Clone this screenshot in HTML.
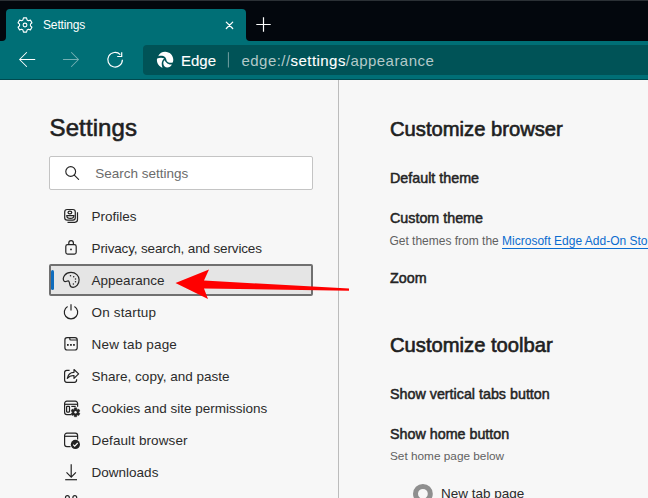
<!DOCTYPE html>
<html><head><meta charset="utf-8">
<style>
*{margin:0;padding:0;box-sizing:border-box}
html,body{width:648px;height:498px;overflow:hidden;background:#f7f7f7;font-family:"Liberation Sans",sans-serif;color:#242424}
.abs{position:absolute}
.t{position:absolute;white-space:nowrap;line-height:1}
#strip{left:0;top:0;width:648px;height:41px;background:#03070d}
#topline{left:0;top:0;width:648px;height:1px;background:#2b3035}
#tab{left:6px;top:9px;width:240px;height:33px;background:#006f76;border-radius:4px 4px 0 0}
#toolbar{left:0;top:41px;width:648px;height:38px;background:#006f76}
#tbline{left:0;top:79px;width:648px;height:1px;background:#004a4f}
#addr{left:143px;top:45px;width:520px;height:30px;background:#005357;border-radius:4px}
#divider{left:338px;top:80px;width:1px;height:418px;background:#bcbcbc}
#search{left:49px;top:156px;width:264px;height:34px;background:#fff;border:1px solid #c4c4c4;border-radius:2px}
#sel{left:49px;top:264px;width:264px;height:32px;background:#e5e5e5;border:2px solid #707070;border-radius:2px}
#bluebar{left:51px;top:270px;width:3px;height:20px;background:#0f6cbd;border-radius:2px}
.item{font-size:13.5px;color:#2b2b2b}
.sub{font-size:14.3px;color:#242424;-webkit-text-stroke:0.5px #242424}
.hd{font-size:20.2px;color:#1f1f1f;-webkit-text-stroke:0.65px #1f1f1f}
.small{font-size:12px;color:#616161}
</style></head><body>
<div id="strip" class="abs"></div>
<div id="topline" class="abs"></div>
<div id="tab" class="abs"></div>
<div id="toolbar" class="abs"></div>
<div id="tbline" class="abs"></div>
<div id="addr" class="abs"></div>

<!-- tab contents -->
<div class="t" style="left:43px;top:18.8px;font-size:12px;letter-spacing:-0.15px;color:#fff">Settings</div>

<div class="t" style="left:181px;top:53.3px;font-size:15px;color:#fff;-webkit-text-stroke:0.12px #fff">Edge</div>
<div class="t" style="left:241.5px;top:53px;font-size:15px;letter-spacing:0.45px;color:#b3c9c9">edge://<span style="color:#fff;-webkit-text-stroke:0.12px #fff">settings</span>/appearance</div>
<!-- page -->
<div id="divider" class="abs"></div>
<div class="t" style="left:49.5px;top:116px;font-size:24px;letter-spacing:0.12px;color:#1f1f1f;-webkit-text-stroke:0.6px #1f1f1f">Settings</div>
<div id="search" class="abs"></div>
<div class="t" style="left:95.3px;top:166.6px;font-size:13.5px;color:#6b6b6b">Search settings</div>
<div id="sel" class="abs"></div>
<div id="bluebar" class="abs"></div>

<div class="t item" style="left:91.6px;top:209.6px">Profiles</div>
<div class="t item" style="left:91.6px;top:241.6px;letter-spacing:-0.15px">Privacy, search, and services</div>
<div class="t item" style="left:91.6px;top:273.6px">Appearance</div>
<div class="t item" style="left:91.6px;top:305.6px;letter-spacing:0.15px">On startup</div>
<div class="t item" style="left:91.6px;top:337.6px;letter-spacing:0.18px">New tab page</div>
<div class="t item" style="left:91.6px;top:369.6px">Share, copy, and paste</div>
<div class="t item" style="left:91.6px;top:401.6px">Cookies and site permissions</div>
<div class="t item" style="left:91.6px;top:433.6px;letter-spacing:0.1px">Default browser</div>
<div class="t item" style="left:91.6px;top:465.6px">Downloads</div>

<div class="t hd" style="left:390px;top:119px">Customize browser</div>
<div class="t sub" style="left:390px;top:171.3px">Default theme</div>
<div class="t sub" style="left:390px;top:211.3px">Custom theme</div>
<div class="t small" style="left:389.4px;top:234.8px">Get themes from the <span style="color:#0b6ccf;border-bottom:1px solid #0b6ccf">Microsoft Edge Add-On Store</span></div>
<div class="t sub" style="left:390px;top:271.3px">Zoom</div>
<div class="t hd" style="left:390px;top:335px">Customize toolbar</div>
<div class="t sub" style="left:390px;top:387.3px">Show vertical tabs button</div>
<div class="t sub" style="left:390px;top:427.3px">Show home button</div>
<div class="t small" style="left:390px;top:451px;font-size:11.8px">Set home page below</div>
<div class="t item" style="left:441px;top:487px">New tab page</div>

<svg class="abs" style="left:0;top:0" width="648" height="498" viewBox="0 0 648 498">
<!-- tab inverse corners -->
<path d="M2,41 A4,4 0 0 0 6,37 L6,41 Z" fill="#006f76"/>
<path d="M246,37 A4,4 0 0 0 250,41 L246,41 Z" fill="#006f76"/>
<!-- gear -->
<path d="M27.06,19.90 L26.52,17.86 L23.48,17.86 L22.94,19.90 L21.61,20.67 L19.58,20.12 L18.06,22.74 L19.55,24.23 L19.55,25.77 L18.06,27.26 L19.58,29.88 L21.61,29.33 L22.94,30.10 L23.48,32.14 L26.52,32.14 L27.06,30.10 L28.39,29.33 L30.42,29.88 L31.94,27.26 L30.45,25.77 L30.45,24.23 L31.94,22.74 L30.42,20.12 L28.39,20.67 Z" fill="none" stroke="#fff" stroke-width="1.1" stroke-linejoin="round"/>
<circle cx="25" cy="25" r="1.9" fill="none" stroke="#fff" stroke-width="1.1"/>
<!-- close x -->
<path d="M226.3,22.1 L232.7,28.5 M232.7,22.1 L226.3,28.5" stroke="#fff" stroke-width="1.25" stroke-linecap="round"/>
<!-- plus -->
<path d="M256.3,24.5 H270.7 M263.5,17.3 V31.7" stroke="#fff" stroke-width="1.2"/>
<!-- back -->
<path d="M34.8,59.5 H19.6 M26.6,52.5 L19.6,59.5 L26.6,66.5" fill="none" stroke="#fff" stroke-width="1.05" stroke-linejoin="round" stroke-linecap="round"/>
<!-- forward -->
<path d="M63.4,59.5 H78.5 M71.5,52.5 L78.5,59.5 L71.5,66.5" fill="none" stroke="#fff" stroke-opacity="0.45" stroke-width="1.05" stroke-linejoin="round" stroke-linecap="round"/>
<!-- refresh -->
<path d="M122.4,59.7 A7.3,7.3 0 1 1 120.3,54.6" fill="none" stroke="#fff" stroke-width="1.2"/>
<path d="M117.2,56.5 H121.7 V52.2" fill="none" stroke="#fff" stroke-width="1.2"/>
<!-- edge logo -->
<g fill="#fff">
<path d="M158.2,56.2 C159.5,53.3 162.2,51.8 165.1,51.8 C169.6,51.8 173.3,55.4 173.3,59.8 C173.3,60.7 173.1,61.6 172.8,62.4 C171.2,62.9 169.8,62.9 168.6,62.5 C167.3,62 166.7,61.2 166.5,60.3 C166.3,59.1 166,58 165.2,57.2 C163.4,55.6 160.6,55.5 158.2,56.2 Z"/>
<path d="M157.2,58.6 C156.9,59.1 156.9,59.5 156.9,60 C156.9,63.5 159.2,66.5 162.5,67.8 C161.9,66.4 161.6,65 161.7,63.6 C161.8,61.5 162.6,59.5 164.3,58.4 C162.2,57.3 159.3,57.4 157.2,58.6 Z"/>
<path d="M164.5,60.2 C163.5,61.3 163.2,62.6 163.4,64 C163.7,66 165.2,67.4 167.2,67.5 C169.3,67.5 171,66.3 171.9,64.5 C170.8,64.7 169.5,64.5 168.5,64 C166.9,63.3 165.6,62 164.5,60.2 Z"/>
</g>
<!-- separator -->
<path d="M228.4,52.2 V67.5" stroke="#fff" stroke-opacity="0.45" stroke-width="1"/>
<!-- search icon -->
<circle cx="70.7" cy="171.5" r="4.9" fill="none" stroke="#242424" stroke-width="1.15"/>
<path d="M74.3,175.1 L78.6,179.4" stroke="#242424" stroke-width="1.15" stroke-linecap="round"/>
<g fill="none" stroke="#242424" stroke-width="1.2">
<!-- profile -->
<rect x="64.7" y="209.5" width="10.6" height="10.6" rx="2.4"/>
<ellipse cx="69.9" cy="212.5" rx="1.9" ry="1.4"/>
<path d="M66.8,215.7 H73.9 C73.9,217.5 72,218.3 70.35,218.3 C68.7,218.3 66.8,217.5 66.8,215.7 Z"/>
<path d="M77.5,212.3 V219.6 A2.7,2.7 0 0 1 74.8,222.3 H67.5"/>
<!-- lock -->
<rect x="65.8" y="244.7" width="10.4" height="9.4" rx="1.8"/>
<path d="M68.8,244.7 V243 A2.3,2.3 0 0 1 73.4,243 V244.7"/>
<!-- palette -->
<path d="M64.3,281.4 C63.2,280.2 63.1,277.5 64.6,275.4 C66.2,273.2 68.6,272.4 71,272.4 C75.8,272.4 79.1,276 79.1,279.8 C79.1,284 76.3,287.4 73.1,287.4 C71.3,287.4 70.2,286.3 69.8,284.6 C69.5,283.2 69.5,281.9 68.6,281 C67.6,280.2 65.6,282.6 64.3,281.4 Z"/>
<!-- power -->
<path d="M67.6,306.4 A6.7,6.7 0 1 0 74.4,306.4"/>
<path d="M71,304.2 V310.6"/>
<!-- new tab page -->
<rect x="64.9" y="337.7" width="12.3" height="12.3" rx="2.2"/>
<path d="M69.8,337.7 V339 A1,1 0 0 0 70.8,340 H77.2"/>
<!-- share -->
<path d="M69.6,370.4 H66.8 A2.2,2.2 0 0 0 64.6,372.6 V380.1 A2.2,2.2 0 0 0 66.8,382.3 H74.4 A2.2,2.2 0 0 0 76.6,380.1 V379.2"/>
<path d="M67.3,378.4 C67.9,374.6 70.5,372.3 74,372.3 V369.5 L78.6,373.9 L74,378.4 V375.5 C71.5,375.4 69,376.3 67.3,378.4 Z" stroke-linejoin="round"/>
<!-- cookies -->
<path d="M71.5,414.6 H66.9 A2.3,2.3 0 0 1 64.6,412.3 V403.5 A2.3,2.3 0 0 1 66.9,401.2 H75.3 A2.3,2.3 0 0 1 77.6,403.5 V406.8"/>
<path d="M64.6,404.3 H77.6"/>
<rect x="66.6" y="406.3" width="2.9" height="5.8" rx="0.5"/>
<path d="M71.3,406.4 H75.7"/>
<!-- default browser -->
<path d="M70.5,446.6 H66.9 A2.3,2.3 0 0 1 64.6,444.3 V435.5 A2.3,2.3 0 0 1 66.9,433.2 H75.3 A2.3,2.3 0 0 1 77.6,435.5 V439.5"/>
<path d="M64.6,436.3 H77.6"/>
<!-- downloads -->
<path d="M71.2,464.2 V477 M66.5,472.4 L71.2,477.1 L75.9,472.4"/>
<path d="M65.2,479.7 H77"/>
<!-- partial family -->
<circle cx="67.4" cy="497.6" r="1.9"/>
<circle cx="74.8" cy="497.6" r="1.9"/>
</g>
<g fill="#242424">
<circle cx="71" cy="249.4" r="0.9"/>
<circle cx="70.5" cy="275.8" r="0.75"/><circle cx="73.7" cy="276.8" r="0.75"/><circle cx="75.5" cy="278.9" r="0.75"/><circle cx="75.5" cy="281.7" r="0.75"/><circle cx="73.4" cy="284" r="0.75"/>
<rect x="67" y="344" width="1.7" height="1.8"/><rect x="70.1" y="344" width="1.7" height="1.8"/><rect x="73.1" y="344" width="1.7" height="1.8"/>
</g>
<!-- cookies gear -->
<path d="M76.90,409.42 L76.61,407.84 L74.39,407.84 L74.10,409.42 L73.71,409.65 L72.19,409.10 L71.08,411.03 L72.31,412.08 L72.31,412.52 L71.08,413.57 L72.19,415.50 L73.71,414.95 L74.10,415.18 L74.39,416.76 L76.61,416.76 L76.90,415.18 L77.29,414.95 L78.81,415.50 L79.92,413.57 L78.69,412.52 L78.69,412.08 L79.92,411.03 L78.81,409.10 L77.29,409.65 Z" fill="#242424" stroke="#242424" stroke-width="0.5" stroke-linejoin="round"/>
<circle cx="75.5" cy="412.3" r="1.2" fill="#f7f7f7"/>
<!-- default browser check -->
<circle cx="75.4" cy="444.4" r="4.6" fill="#242424"/>
<path d="M73.2,444.6 L74.7,446.1 L77.7,443" fill="none" stroke="#fff" stroke-width="1.1"/>
<!-- red arrow -->
<path d="M175.5,283 L209,269.5 L204,280.5 L349,288.6 L349,290.8 L204,288.4 L208,299 Z" fill="#ff0000"/>
<!-- radio -->
<circle cx="422.9" cy="493.8" r="7.4" fill="none" stroke="#8f8f8f" stroke-width="5"/>
</svg>
</body></html>
